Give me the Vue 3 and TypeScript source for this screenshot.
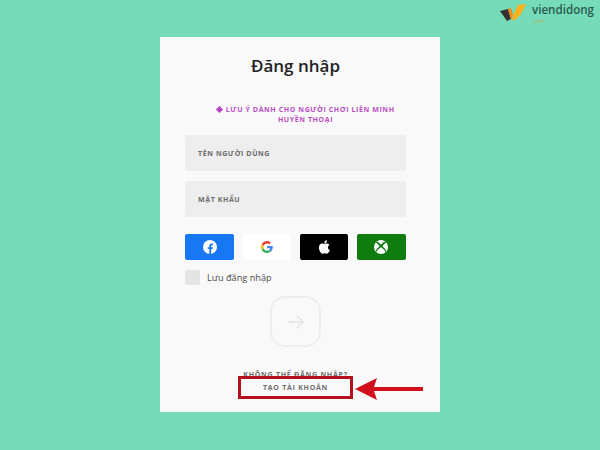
<template>
  <div class="page">
    <!-- logo -->
    <div class="logo">
      <svg width="28" height="19" viewBox="0 0 28 19">
        <path d="M1 9 L9 7 L12 17 L8 19 Z" fill="#33322e" />
        <path d="M13 18 L15 11 L19 3 L27 2 L22 12 L16 18 Z" fill="#f9b21c" />
        <path d="M9 7 L12 6 L14 13 L12 18 Z" fill="#f08a1d" />
      </svg>
      <div class="logo-text">
        <span class="logo-name">viendidong</span>
        <span class="logo-sub">.com</span>
      </div>
    </div>

    <div class="card">
      <h1 class="title">Đăng nhập</h1>

      <p class="notice"><span class="diamond"></span> LƯU Ý DÀNH CHO NGƯỜI CHƠI LIÊN MINH HUYỀN THOẠI</p>

      <div class="field">TÊN NGƯỜI DÙNG</div>
      <div class="field">MẬT KHẨU</div>

      <div class="socials">
        <button class="social fb">
          <svg width="14" height="14" viewBox="0 0 24 24">
            <circle cx="12" cy="12" r="12" fill="#fff" />
            <path d="M16.500 15.500 L17 12.500 H14 V10.500 C14 9.600 14.500 9 15.600 9 H17.100 V6.300 C16.300 6.100 15.500 6 14.800 6 C12.400 6 10.800 7.500 10.800 10.100 V12.500 H8 V15.500 H10.800 V24 H14 V15.500 Z" fill="#1877f2" />
          </svg>
        </button>
        <button class="social google">
          <svg width="12" height="12" viewBox="0 0 48 48">
            <path fill="#EA4335" d="M24 9.500c3.500 0 6.700 1.200 9.200 3.600l6.900-6.900C35.900 2.400 30.500 0 24 0 14.600 0 6.500 5.400 2.600 13.200l8 6.200C12.500 13.600 17.800 9.500 24 9.500z" />
            <path fill="#4285F4" d="M47 24.500c0-1.600-.1-3.100-.4-4.500H24v9h12.900c-.6 3-2.200 5.500-4.700 7.200l7.700 6C44.400 38.600 47 32.100 47 24.500z" />
            <path fill="#FBBC05" d="M10.500 28.600c-.5-1.400-.8-3-.8-4.600s.3-3.200.8-4.600l-8-6.200C.9 16.500 0 20.100 0 24s.9 7.500 2.600 10.800l7.900-6.200z" />
            <path fill="#34A853" d="M24 48c6.500 0 11.900-2.100 15.900-5.800l-7.700-6c-2.200 1.400-4.900 2.300-8.200 2.300-6.200 0-11.500-4.100-13.400-9.900l-8 6.200C6.500 42.600 14.600 48 24 48z" />
          </svg>
        </button>
        <button class="social apple">
          <svg width="16" height="16" viewBox="0 0 24 24">
            <path fill="#fff" d="M17.900 12.700c0-2.500 2-3.700 2.100-3.800-1.200-1.700-3-1.900-3.600-2-1.500-.2-3 .9-3.800.9-.8 0-2-.9-3.300-.9-1.700 0-3.300 1-4.100 2.500-1.800 3.100-.5 7.600 1.200 10.100.9 1.200 1.900 2.600 3.200 2.500 1.300 0 1.800-.8 3.300-.8s2 .8 3.300.8c1.400 0 2.200-1.200 3.100-2.400 1-1.400 1.400-2.800 1.400-2.900-.1 0-2.800-1.100-2.800-4zM15.400 5.200c.7-.9 1.200-2 1.100-3.200-1 0-2.300.7-3 1.500-.6.800-1.200 2-1.100 3.100 1.200.1 2.300-.5 3-1.400z" />
          </svg>
        </button>
        <button class="social xbox">
          <svg width="14" height="14" viewBox="0 0 24 24">
            <circle cx="12" cy="12" r="12" fill="#fff" />
            <path d="M5 2.500 C8 3.500 10 6 12 8 C14 6 16 3.500 19 2.500 L21 4 C18.500 6 16 8.500 14.500 10.500 C17.500 13 20 16 21.500 19.500 L20 20.500 C18 17.500 15 14.500 12 12.500 C9 14.500 6 17.500 4 20.500 L2.500 19.500 C4 16 6.500 13 9.500 10.500 C8 8.500 5.500 6 3 4 Z" fill="#107c10" />
          </svg>
        </button>
      </div>

      <label class="remember">
        <span class="checkbox"></span>
        <span>Lưu đăng nhập</span>
      </label>

      <button class="submit">
        <svg width="18" height="18" viewBox="0 0 20 20" fill="none" stroke="#e2e2e2" stroke-width="1.500">
          <path d="M2 10 H18 M11 3 L18 10 L11 17" />
        </svg>
      </button>

      <div class="links">
        <a class="link">KHÔNG THỂ ĐĂNG NHẬP?</a>
        <a class="link create">TẠO TÀI KHOẢN</a>
      </div>
    </div>

    <!-- red annotation arrow -->
    <svg class="annotation" width="70" height="24" viewBox="0 0 70 24">
      <path d="M0 12 L22 1 L19 10 H68 V14 H19 L22 23 Z" fill="#d0101c" />
    </svg>
  </div>
</template>

<script setup lang="ts">
</script>

<style>
body {
  margin: 0;
}
</style>

<style scoped>
.page {
  position: relative;
  width: 600px;
  height: 450px;
  overflow: hidden;
  background: #75dbb9;
  display: flex;
  justify-content: center;
  padding-top: 37px;
  box-sizing: border-box;
  font-family: "Open Sans", "Noto Sans", sans-serif;
}

.logo {
  position: absolute;
  top: 2px;
  left: 499px;
  display: flex;
  align-items: flex-start;
  gap: 5px;
}

.logo-text {
  display: flex;
  flex-direction: column;
}

.logo-name {
  font-size: 11.600px;
  line-height: 16px;
  font-weight: 600;
  color: #2c5a50;
}

.logo-sub {
  font-size: 5px;
  line-height: 6px;
  color: #b5b04a;
  margin-left: 1px;
}

.card {
  width: 280px;
  height: 375px;
  box-sizing: border-box;
  background: #f9f9f9;
  padding: 17px 34px 0 25px;
  display: flex;
  flex-direction: column;
}

.title {
  margin: 0;
  text-align: center;
  font-size: 17px;
  line-height: 24px;
  font-weight: 600;
  color: #222;
}

.notice {
  margin: 27px 0 0;
  padding: 0 0 0 20px;
  text-align: center;
  font-size: 7px;
  line-height: 10px;
  font-weight: 700;
  letter-spacing: 0.6px;
  color: #b94fc4;
}

.diamond {
  display: inline-block;
  width: 5px;
  height: 5px;
  margin: 0 1px;
  background: #b83fc4;
  transform: rotate(45deg);
}

.field {
  margin-top: 10px;
  height: 36px;
  line-height: 37px;
  padding-left: 13px;
  background: #eeeeee;
  border-radius: 2px;
  font-size: 7px;
  font-weight: 700;
  letter-spacing: 0.6px;
  color: #6b6b6b;
}

.socials {
  margin-top: 17px;
  display: grid;
  grid-template-columns: 49px 47px 48px 49px;
  justify-content: space-between;
}

.social {
  height: 26px;
  padding: 0;
  border: none;
  border-radius: 2px;
  display: flex;
  align-items: center;
  justify-content: center;
}

.fb {
  background: #1877f2;
}

.google {
  background: #fff;
}

.apple {
  background: #000;
}

.xbox {
  background: #107c10;
}

.remember {
  margin-top: 10px;
  display: flex;
  align-items: center;
  gap: 7px;
  font-size: 9.200px;
  color: #4f4f4f;
}

.checkbox {
  width: 15px;
  height: 15px;
  background: #e4e4e4;
  border-radius: 2px;
}

.submit {
  margin: 11px auto 0;
  width: 51px;
  height: 51px;
  padding: 0;
  background: transparent;
  border: 2px solid #eeeeee;
  border-radius: 15px;
  display: flex;
  align-items: center;
  justify-content: center;
}

.links {
  margin-top: 23px;
  display: flex;
  flex-direction: column;
  align-items: center;
  gap: 4px;
}

.link {
  font-size: 7px;
  line-height: 9px;
  font-weight: 700;
  letter-spacing: 0.75px;
  color: #6e6e6e;
}

.create {
  position: relative;
}

/* red box drawn over the link */
.create::after {
  content: "";
  position: absolute;
  left: -25px;
  right: -25px;
  top: -7px;
  bottom: -7px;
  border: 3px solid #b3101e;
}

.annotation {
  position: absolute;
  left: 355px;
  top: 377px;
}
</style>
